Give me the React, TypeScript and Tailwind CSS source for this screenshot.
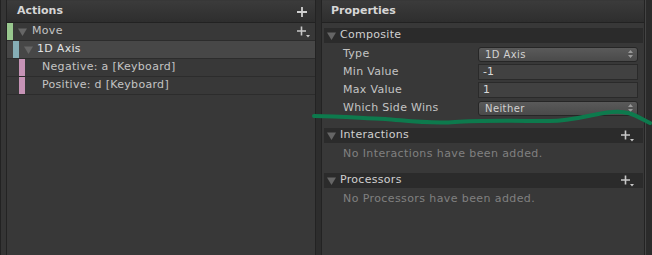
import React from "react";

const font = { fontFamily: '"DejaVu Sans", Verdana, sans-serif' };

function Tri({ className = "" }: { className?: string }) {
  return (
    <svg width="9" height="8" viewBox="0 0 9 8" className={className}>
      <path d="M0 0.5 L9 0.5 L4.5 8 Z" fill="#666666" />
    </svg>
  );
}

function PlusDrop() {
  return (
    <svg width="13" height="12" viewBox="0 0 13 12">
      <path d="M4.5 0.5 V9.5 M0 5 H9" stroke="#c8c8c8" strokeWidth="1.6" />
      <path d="M9 9 H13 L11 11.5 Z" fill="#c8c8c8" />
    </svg>
  );
}

function Plus() {
  return (
    <svg width="10" height="10" viewBox="0 0 10 10">
      <path d="M5 0 V10 M0 5 H10" stroke="#d0d0d0" strokeWidth="1.8" />
    </svg>
  );
}

function Updown() {
  return (
    <svg width="5" height="8" viewBox="0 0 5 8">
      <path d="M0 3 L2.5 0 L5 3 Z M0 5 L2.5 8 L5 5 Z" fill="#9a9a9a" />
    </svg>
  );
}

function Row({ bar, barLeft, tri, textLeft, label, selected }: { bar: string; barLeft: number; tri: boolean; textLeft: number; label: string; selected?: boolean }) {
  return (
    <div className={`h-[18px] border-b border-[#2c2c2c] flex items-center relative ${selected ? "bg-[#474747] text-[#e4e4e4]" : "text-[#c4c4c4]"}`}>
      <div className="h-full w-[6px] shrink-0" style={{ marginLeft: barLeft, background: bar }} />
      {tri && <Tri className="ml-[5px]" />}
      <span className="text-[11px] tracking-[0.3px]" style={{ marginLeft: textLeft }}>{label}</span>
    </div>
  );
}

function SectionHead({ title, plus }: { title: string; plus?: boolean }) {
  return (
    <div className="h-[15px] bg-[#2b2b2b] flex items-center pl-[3px] pr-[9px]">
      <Tri />
      <span className="ml-[4px] text-[11px] text-[#d0d0d0] tracking-[0.3px]">{title}</span>
      {plus && (
        <span className="ml-auto">
          <PlusDrop />
        </span>
      )}
    </div>
  );
}

function Field({ label, value, drop }: { label: string; value: string; drop?: boolean }) {
  return (
    <div className="h-[18px] flex items-center pl-[19px] pr-[5px]">
      <span className="w-[135px] text-[11px] text-[#c4c4c4] tracking-[0.3px]">{label}</span>
      {drop ? (
        <div className="flex-1 h-[15px] rounded-[3px] border border-[#262626] bg-gradient-to-b from-[#5a5a5a] to-[#4a4a4a] flex items-center pl-[6px] pr-[4px] text-[10px] text-[#d2d2d2] tracking-[0.4px]">
          <span>{value}</span>
          <span className="ml-auto">
            <Updown />
          </span>
        </div>
      ) : (
        <div className="flex-1 h-[16px] border border-[#2a2a2a] bg-[#414141] flex items-center pl-[4px] text-[11px] text-[#d8d8d8]">
          {value}
        </div>
      )}
    </div>
  );
}

export default function App() {
  return (
    <div className="w-[652px] h-[255px] bg-[#2d2d2d] flex relative overflow-hidden" style={font}>
      <div className="w-[6px] border-l border-[#222] bg-[#353535]" />
      {/* actions */}
      <div className="w-[310px] h-full bg-[#383838] border-l border-r border-[#232323] flex flex-col">
        <div className="h-[22px] mt-[1px] bg-gradient-to-b from-[#3b3b3b] to-[#2e2e2e] border-b border-[#222] flex items-center pl-[10px] pr-[8px]">
          <span className="text-[11px] font-bold text-[#d6d6d6]">Actions</span>
          <span className="ml-auto">
            <Plus />
          </span>
        </div>
        <div className="relative">
          <Row bar="#98c78e" barLeft={0} tri textLeft={5} label="Move" />
          <span className="absolute right-[5px] top-[3px]">
            <PlusDrop />
          </span>
        </div>
        <Row bar="#86aeb6" barLeft={6} tri textLeft={4} label="1D Axis" selected />
        <Row bar="#c693b6" barLeft={12} tri={false} textLeft={17} label="Negative: a [Keyboard]" />
        <Row bar="#c693b6" barLeft={12} tri={false} textLeft={17} label="Positive: d [Keyboard]" />
      </div>
      <div className="w-[5px]" />
      {/* properties */}
      <div className="w-[324px] h-full bg-[#383838] border-l border-r border-[#232323] flex flex-col">
        <div className="h-[22px] mt-[1px] bg-gradient-to-b from-[#3b3b3b] to-[#2e2e2e] border-b border-[#222] flex items-center pl-[9px]">
          <span className="text-[11px] font-bold text-[#d6d6d6]">Properties</span>
        </div>
        <div className="pl-[2px] pr-[1px] pt-[5px] flex flex-col">
          <SectionHead title="Composite" />
          <div className="pt-[2px]">
            <Field label="Type" value="1D Axis" drop />
            <Field label="Min Value" value="-1" />
            <Field label="Max Value" value="1" />
            <Field label="Which Side Wins" value="Neither" drop />
          </div>
          <div className="mt-[11px]">
            <SectionHead title="Interactions" plus />
          </div>
          <div className="h-[22px] pl-[19px] flex items-center text-[11px] text-[#808080] tracking-[0.4px]">
            No Interactions have been added.
          </div>
          <div className="mt-[8px]">
            <SectionHead title="Processors" plus />
          </div>
          <div className="h-[22px] pl-[19px] flex items-center text-[11px] text-[#808080] tracking-[0.4px]">
            No Processors have been added.
          </div>
        </div>
      </div>
      <div className="flex-1 bg-[#2b2b2b] border-l border-[#444]" />
      {/* hand drawn scribble */}
      <svg className="absolute left-0 top-0 pointer-events-none" width="652" height="255" viewBox="0 0 652 255">
        <path
          d="M314 116 C340 116 360 118 385 119 C410 121 430 124 455 122 C480 120 520 121 550 121 C575 121 590 114 612 112 C628 110 636 116 650 123"
          fill="none"
          stroke="#0d7a4d"
          strokeWidth="4"
          strokeLinecap="round"
        />
      </svg>
    </div>
  );
}
